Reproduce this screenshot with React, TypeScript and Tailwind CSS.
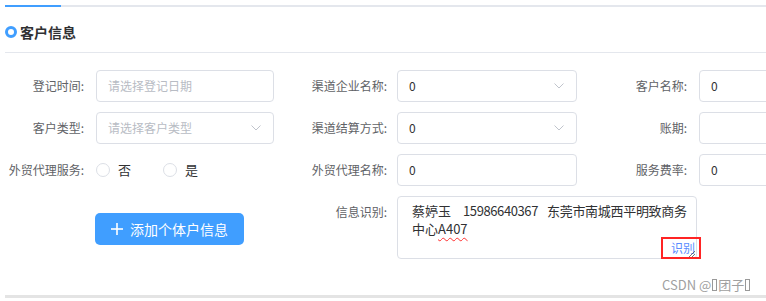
import React from "react";

const Chevron = () => (
  <svg width="10" height="6" viewBox="0 0 10 6" fill="none">
    <polyline points="0.5,0.5 5,5 9.5,0.5" stroke="#c0c4cc" strokeWidth="1" />
  </svg>
);

const Label = ({ w, children }: { w: string; children: React.ReactNode }) => (
  <div className={`${w} shrink-0 text-right text-[12px] leading-[32px] text-[#606266]`}>{children}</div>
);

const Input = ({
  w,
  value,
  placeholder,
  select,
}: {
  w: string;
  value?: string;
  placeholder?: string;
  select?: boolean;
}) => (
  <div
    className={`${w} shrink-0 h-[32px] rounded-[4px] border border-[#dcdfe6] bg-white flex items-center pl-[11px] pr-[12px]`}
  >
    <span className={`flex-1 text-[12px] leading-[30px] ${value ? "text-[#303133]" : "text-[#b8bcc4]"}`}>
      {value ?? placeholder}
    </span>
    {select && <Chevron />}
  </div>
);

const Tofu = () => (
  <span className="inline-block w-[5px] h-[12px] border border-[#999] mx-[1px] align-[-1px]" />
);

export default function App() {
  return (
    <div className="relative w-[766px] h-[301px] overflow-hidden bg-white font-['Noto_Sans_CJK_SC',sans-serif]">
      <div className="pl-[5px] pt-[5px]">
        <div className="h-[2px] bg-[#e4e7ed]">
          <div className="w-[56px] h-full bg-[#409eff]" />
        </div>
        <div className="h-[45px] pt-[5px] flex items-center">
          <div className="w-[12px] h-[12px] rounded-full border-[3px] border-[#409eff] mr-[3px]" />
          <span className="text-[14px] font-bold text-[#303133] leading-[20px]">客户信息</span>
        </div>
        <div className="h-px bg-[#e4e7ed]" />

        <div className="mt-[17px] flex flex-col gap-[10px]">
          <div className="flex h-[32px]">
            <Label w="w-[79px]">登记时间:</Label>
            <div className="w-[12px] shrink-0" />
            <Input w="w-[178px]" placeholder="请选择登记日期" />
            <Label w="w-[113px]">渠道企业名称:</Label>
            <div className="w-[10px] shrink-0" />
            <Input w="w-[180px]" value="0" select />
            <Label w="w-[110px]">客户名称:</Label>
            <div className="w-[12px] shrink-0" />
            <Input w="w-[180px]" value="0" />
          </div>
          <div className="flex h-[32px]">
            <Label w="w-[79px]">客户类型:</Label>
            <div className="w-[12px] shrink-0" />
            <Input w="w-[178px]" placeholder="请选择客户类型" select />
            <Label w="w-[113px]">渠道结算方式:</Label>
            <div className="w-[10px] shrink-0" />
            <Input w="w-[180px]" value="0" select />
            <Label w="w-[110px]">账期:</Label>
            <div className="w-[12px] shrink-0" />
            <Input w="w-[180px]" value="" />
          </div>
          <div className="flex h-[32px]">
            <Label w="w-[79px]">外贸代理服务:</Label>
            <div className="w-[12px] shrink-0" />
            <div className="w-[178px] shrink-0 flex items-center">
              <div className="w-[14px] h-[14px] rounded-full border border-[#dcdfe6] bg-white" />
              <span className="ml-[8px] text-[13px] text-[#303133]">否</span>
              <div className="ml-[32px] w-[14px] h-[14px] rounded-full border border-[#dcdfe6] bg-white" />
              <span className="ml-[8px] text-[13px] text-[#303133]">是</span>
            </div>
            <Label w="w-[113px]">外贸代理名称:</Label>
            <div className="w-[10px] shrink-0" />
            <Input w="w-[180px]" value="0" />
            <Label w="w-[110px]">服务费率:</Label>
            <div className="w-[12px] shrink-0" />
            <Input w="w-[180px]" value="0" />
          </div>
          <div className="flex h-[63px]">
            <div className="w-[269px] shrink-0 pl-[90px] pt-[17px]">
              <button className="w-[149px] h-[32px] rounded-[5px] bg-[#409eff] flex items-center pl-[16px] text-white">
                <svg width="12" height="12" viewBox="0 0 12 12">
                  <line x1="6" y1="0" x2="6" y2="12" stroke="white" strokeWidth="1.6" />
                  <line x1="0" y1="6" x2="12" y2="6" stroke="white" strokeWidth="1.6" />
                </svg>
                <span className="ml-[7px] text-[14px] leading-[20px]">添加个体户信息</span>
              </button>
            </div>
            <Label w="w-[113px]">信息识别:</Label>
            <div className="w-[10px] shrink-0" />
            <div className="relative w-[300px] h-[63px] shrink-0 rounded-[4px] border border-[#dcdfe6] bg-white pl-[14px] pt-[5px] text-[13px] leading-[18px] text-[#303133]">
              <div className="whitespace-nowrap">
                蔡婷玉<span className="inline-block w-[12px]" /><span className="tracking-[-0.4px]">15986640367</span><span className="inline-block w-[9px]" /><span className="tracking-[-0.3px]">东莞市南城西平明致商务</span>
              </div>
              <div>
                中心<span className="underline decoration-wavy decoration-[#ff3030] decoration-1 underline-offset-[3px]">A407</span>
              </div>
              <div className="absolute right-[-5px] bottom-[-1px] w-[40px] h-[22px] border-2 border-[#ff2424] flex items-center pl-[8px]">
                <span className="text-[12px] leading-[16px] text-[#5a8cff]">识别</span>
              </div>
              <svg className="absolute right-[1px] bottom-[1px]" width="6" height="6" viewBox="0 0 6 6">
                <line x1="6" y1="0" x2="0" y2="6" stroke="#555" strokeWidth="0.8" />
                <line x1="6" y1="3" x2="3" y2="6" stroke="#555" strokeWidth="0.8" />
              </svg>
            </div>
          </div>
        </div>
        <div className="mt-[36px] h-[3px] bg-[#e4e4e4]" />
      </div>
      <div className="absolute left-[662px] top-[277px] text-[13px] leading-[16px] text-[#a0a0a0] whitespace-nowrap">
        CSDN @<Tofu />团子<Tofu />
      </div>
    </div>
  );
}
